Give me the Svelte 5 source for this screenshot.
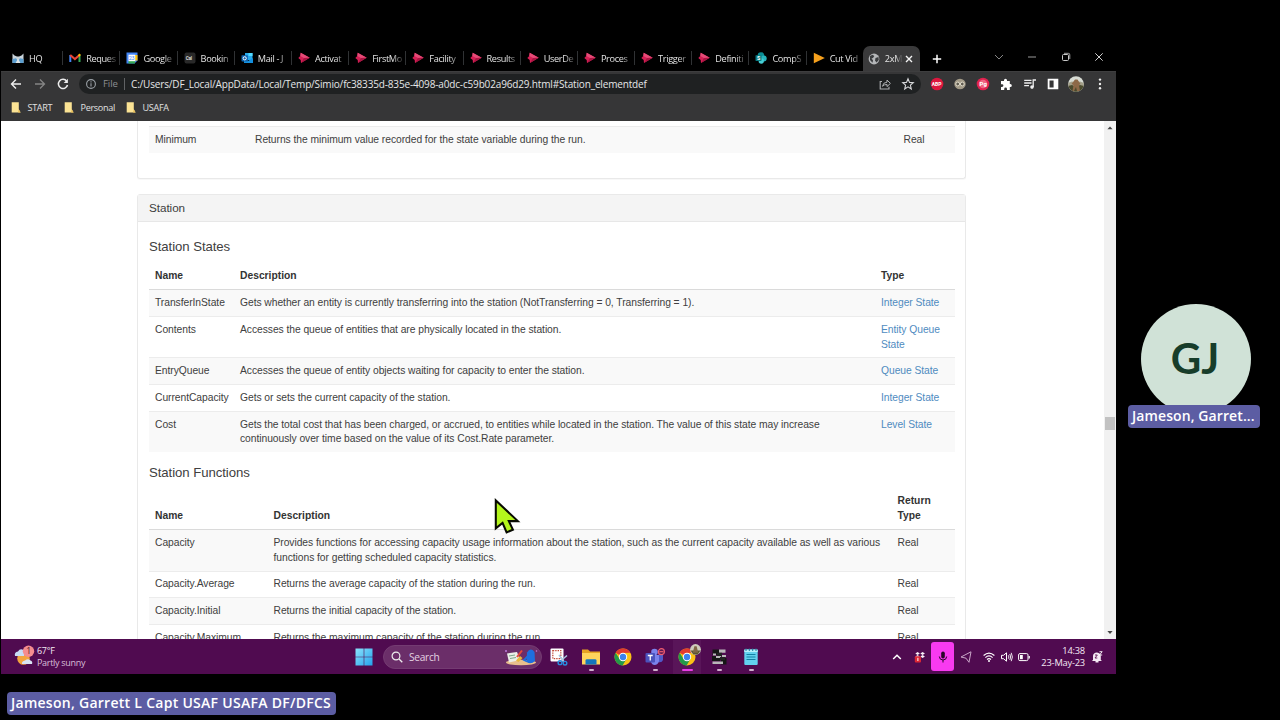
<script>
  const tabs = [
    ['hq', 'HQ'], ['gmail', 'Reques'], ['cal', 'Google'], ['cal2', 'Bookin'], ['mail', 'Mail - J'],
    ['simio', 'Activat'], ['simio', 'FirstMo'], ['simio', 'Facility'], ['simio', 'Results'], ['simio', 'UserDe'],
    ['simio', 'Proces'], ['simio', 'Trigger'], ['simio', 'Definiti'], ['sp', 'CompS'], ['cut', 'Cut Vid']
  ];
  const states = [
    ['TransferInState', ['Gets whether an entity is currently transferring into the station (NotTransferring = 0, Transferring = 1).'], ['Integer State']],
    ['Contents', ['Accesses the queue of entities that are physically located in the station.'], ['Entity Queue', 'State']],
    ['EntryQueue', ['Accesses the queue of entity objects waiting for capacity to enter the station.'], ['Queue State']],
    ['CurrentCapacity', ['Gets or sets the current capacity of the station.'], ['Integer State']],
    ['Cost', ['Gets the total cost that has been charged, or accrued, to entities while located in the station. The value of this state may increase', 'continuously over time based on the value of its Cost.Rate parameter.'], ['Level State']]
  ];
  const functions = [
    ['Capacity', ['Provides functions for accessing capacity usage information about the station, such as the current capacity available as well as various', 'functions for getting scheduled capacity statistics.']],
    ['Capacity.Average', ['Returns the average capacity of the station during the run.']],
    ['Capacity.Initial', ['Returns the initial capacity of the station.']],
    ['Capacity.Maximum', ['Returns the maximum capacity of the station during the run.']]
  ];
  const bookmarks = [['START', 53], ['Personal', 62], ['USAFA', 60]];
</script>

{#snippet lines(list)}
  {#each list as l}<div class="line">{l}</div>{/each}
{/snippet}

{#snippet tabIcon(kind)}
  <svg class="fav" viewBox="0 0 12 12">
    {#if kind === 'hq'}
      <path d="M0.5 1.5 L2.5 3.5 L5 4.5 H7 L9.5 3.5 L11.5 1.5 V11 H0.5Z" fill="#c9d3da" /><path d="M0.5 7 L4 6.3 L6 9 L8 6.3 L11.5 7 V11 H0.5Z" fill="#5d9fd0" /><path d="M3.6 11 L6 6.5 L8.4 11Z" fill="#dfe5e6" />
    {:else if kind === 'gmail'}
      <path d="M1.3 10V3" stroke="#4285f4" stroke-width="2" /><path d="M10.5 10V3" stroke="#34a853" stroke-width="2" /><path d="M1.2 3 L5.9 7 L10.6 3" fill="none" stroke="#ea4335" stroke-width="2.1" /><path d="M9.5 3.9 L11.3 2.3" stroke="#fbbc04" stroke-width="2" />
    {:else if kind === 'cal'}
      <path d="M0.5 0.5H11.5V8.5L8.5 11.5H0.5Z" fill="#4285f4" /><path d="M9 3H11.5V8.5H9Z" fill="#fbbc04" /><path d="M2.5 9H9V11.5H2.5Z" fill="#34a853" /><rect x="2.5" y="2.7" width="6.8" height="6.5" fill="#fff" /><text x="2.8" y="8.1" font-size="5.5" fill="#4285f4" font-family="Roboto">23</text>
    {:else if kind === 'cal2'}
      <rect x="0.5" y="0.5" width="11" height="11" rx="2" fill="#292929" /><text x="1.7" y="7.7" font-size="4.8" font-weight="700" fill="#d7d7d7" font-family="Roboto">Cal</text>
    {:else if kind === 'mail'}
      <path d="M4 1H11.5V8H4Z" fill="#28a8ea" /><path d="M7.5 1H11.5V4H7.5Z" fill="#50d9ff" /><path d="M3 7 L7 9 L12 6V11H3Z" fill="#1490df" /><rect x="0.5" y="3.2" width="6.4" height="6.2" rx="0.6" fill="#0f64b0" /><circle cx="3.7" cy="6.3" r="1.6" fill="none" stroke="#fff" stroke-width="1" />
    {:else if kind === 'simio'}
      <path d="M2.7 0.7 L11.7 5.8 L3 11 L2.7 8 L0.3 6 L2.3 4Z" fill="#d51f55" /><path d="M2.7 0.7 L11.7 5.8 L6 6 L2.3 4Z" fill="#e64b77" /><path d="M3 11 L6 6 L11.7 5.8Z" fill="#a91542" />
    {:else if kind === 'sp'}
      <circle cx="6" cy="3.7" r="3.4" fill="#0b8c93" /><circle cx="8.7" cy="6.4" r="3" fill="#27b4bc" /><circle cx="6.3" cy="9" r="2.7" fill="#45cdd4" /><rect x="0.5" y="3.2" width="6" height="5.7" rx="0.6" fill="#087b82" /><text x="1.9" y="7.9" font-size="5.4" font-weight="700" fill="#fff" font-family="Roboto">S</text>
    {:else}
      <path d="M0.8 0.8 L11.8 6 L0.8 11.3Z" fill="#f5a01d" />
    {/if}
  </svg>
{/snippet}

{#snippet chrome()}
  <circle cx="9" cy="9" r="8.5" fill="#fbc116" />
  <path d="M9 9 L1.6 4.8 A8.5 8.5 0 0 1 16.4 4.8 L9 5Z" fill="#e33b2e" />
  <path d="M1.6 4.8 A8.5 8.5 0 0 0 8.6 17.5 L12.4 11 L6 11.5Z" fill="#249a49" />
  <circle cx="9" cy="9" r="4.2" fill="#fff" /><circle cx="9" cy="9" r="3.2" fill="#3d82ed" />
{/snippet}

<div class="screen">
  <div class="desktop">
    <div class="tabstrip">
      {#each tabs as [kind, label], i}
        <div class="tab" class:last={i === tabs.length - 1}>{@render tabIcon(kind)}<span class="tl">{label}</span></div>
      {/each}
      <div class="tab active">
        <svg class="fav" viewBox="0 0 12 12"><circle cx="6" cy="6" r="5.4" fill="#b5b7b9" /><path d="M2 3 L4.5 1.8 L6.3 3 L5 5 L3.5 5.5 L5 7.3 L4.5 9.8 L2 7Z M7.5 5 L10.5 4 L10.8 7 L8.5 9.5 L7 7.5Z" fill="#3b3d3f" /></svg>
        <span class="tl short">2xM</span>
        <svg class="x" viewBox="0 0 8 8"><path d="M1 1 L7 7 M7 1 L1 7" stroke="#f4f4f4" stroke-width="1.4" /></svg>
      </div>
      <svg class="plus" viewBox="0 0 10 10"><path d="M5 0.8V9.2M0.8 5H9.2" stroke="#fff" stroke-width="1.5" /></svg>
      <div class="winbtns">
        <svg viewBox="0 0 12 12"><path d="M2 4 L6 8 L10 4" fill="none" stroke="#858585" /></svg>
        <svg viewBox="0 0 12 12"><path d="M2 6H10" stroke="#9a9a9a" /></svg>
        <svg viewBox="0 0 12 12"><rect x="2.5" y="3.5" width="6" height="6" rx="1" fill="none" stroke="#c8c8c8" /><path d="M4 2.3H8.3Q9.8 2.3 9.8 3.8V8" fill="none" stroke="#c8c8c8" stroke-width=".8" /></svg>
        <svg viewBox="0 0 12 12"><path d="M2.3 2.3 L9.7 9.7 M9.7 2.3 L2.3 9.7" stroke="#d0d0d0" /></svg>
      </div>
    </div>

    <div class="toolbar">
      <svg class="nav" viewBox="0 0 12 12"><path d="M11 6H1.7M6 1.5 L1.5 6 L6 10.5" fill="none" stroke="#eee" stroke-width="1.4" /></svg>
      <svg class="nav" viewBox="0 0 12 12"><path d="M1 6H10.3M6 1.5 L10.5 6 L6 10.5" fill="none" stroke="#858585" stroke-width="1.3" /></svg>
      <svg class="nav" viewBox="0 0 12 12"><path d="M9.7 3.2A4.6 4.6 0 1 0 10.5 7" fill="none" stroke="#eee" stroke-width="1.5" /><path d="M10.9 0.8V5H6.7Z" fill="#eee" /></svg>
      <div class="omni">
        <svg class="info" viewBox="0 0 12 12"><circle cx="6" cy="6" r="4.4" fill="none" stroke="#9aa0a6" stroke-width="1.1" /><path d="M6 5.3V8.5M6 3.3V4.4" stroke="#9aa0a6" stroke-width="1.1" /></svg>
        <span class="file">File</span>
        <span class="url">C:/Users/DF_Local/AppData/Local/Temp/Simio/fc38335d-835e-4098-a0dc-c59b02a96d29.html#Station_elementdef</span>
        <div class="cells">
          <svg viewBox="0 0 14 14"><path d="M4 4.5H2.2V12H11V9.8" fill="none" stroke="#aeb0b2" stroke-width="1.1" /><path d="M4.5 9.3Q5 5.3 9 5.2V3L12.4 6.4L9 9.6V7.5Q6.3 7.3 4.5 9.3Z" fill="none" stroke="#aeb0b2" /></svg>
          <svg viewBox="0 0 14 14"><path d="M7 1.8 L8.5 5.4 L12.3 5.7 L9.4 8.2 L10.3 12 L7 9.9 L3.7 12 L4.6 8.2 L1.7 5.7 L5.5 5.4Z" fill="none" stroke="#d5d6d8" stroke-width="1.1" /></svg>
        </div>
      </div>
      <div class="cells ext">
        <svg viewBox="0 0 14 14"><circle cx="7" cy="7" r="6.3" fill="#dc173e" /><text x="1.7" y="8.8" font-size="5" font-weight="700" fill="#fff" font-family="Roboto">ABP</text></svg>
        <svg viewBox="0 0 14 14"><ellipse cx="7" cy="7" rx="5.7" ry="5.3" fill="#a49b88" /><circle cx="4.7" cy="7" r="1.9" fill="#605b50" stroke="#e1dccb" /><circle cx="9.3" cy="7" r="1.9" fill="#605b50" stroke="#e1dccb" /></svg>
        <svg viewBox="0 0 14 14"><circle cx="7" cy="7" r="6.3" fill="#e0224f" /><circle cx="7" cy="7" r="4.3" fill="#ef6583" /><text x="3.6" y="9.2" font-size="6" font-weight="700" fill="#fff" font-family="Roboto">Pg</text></svg>
        <svg viewBox="0 0 14 14"><path d="M2 4H5V3.2A1.5 1.5 0 0 1 8 3.2V4H10.8V7H11.3A1.5 1.5 0 0 1 11.3 10H10.8V13H8V12A1.4 1.4 0 0 0 5.2 12V13H2V10H3A1.4 1.4 0 0 0 3 7.2H2Z" fill="#fff" /></svg>
        <svg viewBox="0 0 14 14"><path d="M1.2 3.3H8.5M1.2 6H8.5M1.2 8.7H6" stroke="#eee" stroke-width="1.3" /><path d="M10.2 10V3H13" fill="none" stroke="#eee" stroke-width="1.3" /><circle cx="9" cy="10.1" r="1.8" fill="#eee" /></svg>
        <svg viewBox="0 0 14 14"><path d="M1.7 1.8H12.3V12.2H1.7Z M3.5 3.6V10.4H7.6V3.6Z" fill="#fff" fill-rule="evenodd" /></svg>
        <svg class="big" viewBox="0 0 16 16"><clipPath id="av"><circle cx="8" cy="8" r="7.8" /></clipPath><g clip-path="url(#av)"><rect width="16" height="16" fill="#d8dcd5" /><path d="M0 7 L4 5.5 L8 7 L12 5.5 L16 7V16H0Z" fill="#a3a08a" /><path d="M0 10 L4 9 L8 11 L12 9 L16 10V16H0Z" fill="#4a4a2c" /><path d="M7 3.5H9.5L12.5 8L11 9L12 15H9L8 11L6 15H4.5L5.5 9L3.5 8Z" fill="#8d6948" /></g></svg>
        <svg viewBox="0 0 14 14"><circle cx="7" cy="2.6" r="1.2" fill="#eee" /><circle cx="7" cy="7" r="1.2" fill="#eee" /><circle cx="7" cy="11.2" r="1.2" fill="#eee" /></svg>
      </div>
    </div>

    <div class="bookmarks">
      {#each bookmarks as [name, w]}
        <div class="bm" style="width:{w}px"><svg viewBox="0 0 10 11"><path d="M0.7 0.3H7.8V7.3L9.6 10.5H0.7Z" fill="#fbe394" /><path d="M7.8 7.3L9.6 10.5H7Z" fill="#e8bd55" /></svg><span>{name}</span></div>
      {/each}
    </div>

    <div class="page">
      <div class="content">
        <section class="card prev">
          <div class="row min alt"><div>Minimum</div><div>Returns the minimum value recorded for the state variable during the run.</div><div>Real</div></div>
        </section>
        <section class="card">
          <div class="cardhead">Station</div>
          <div class="cardbody">
            <h4>Station States</h4>
            <div class="table st">
              <div class="row head"><div>Name</div><div>Description</div><div>Type</div></div>
              {#each states as [name, desc, type], i}
                <div class="row" class:alt={i % 2 === 0} class:two={desc.length + type.length > 2}>
                  <div>{name}</div><div>{@render lines(desc)}</div><div class="link">{@render lines(type)}</div>
                </div>
              {/each}
            </div>
            <h4 class="second">Station Functions</h4>
            <div class="table fn">
              <div class="row head tall"><div>Name</div><div>Description</div><div>{@render lines(['Return', 'Type'])}</div></div>
              {#each functions as [name, desc], i}
                <div class="row" class:alt={i % 2 === 0} class:two={desc.length > 1}>
                  <div>{name}</div><div>{@render lines(desc)}</div><div>Real</div>
                </div>
              {/each}
            </div>
          </div>
        </section>
      </div>
      <div class="scroll">
        <svg viewBox="0 0 12 12"><path d="M3.4 7.8 L6 5 L8.6 7.8Z" fill="#444" /></svg>
        <div class="thumb"></div>
        <svg viewBox="0 0 12 12"><path d="M3.4 4.6 L6 7.4 L8.6 4.6Z" fill="#444" /></svg>
      </div>
    </div>

    <div class="taskbar">
      <div class="weather">
        <svg viewBox="0 0 22 22"><circle cx="9.5" cy="13.5" r="6.3" fill="#f3a43e" /><path d="M1 11 Q0 7 4 6.5 Q6 3 9.5 5 Q11 7 10 11Z" fill="#c8dcf5" /><path d="M8 19 Q7.5 16 11 15.5 Q14 13 16.5 15.5 Q19 16.5 18 19Z" fill="#d9e4f3" /><circle cx="14.5" cy="6.2" r="5.7" fill="#f48c90" /><text x="12.3" y="9.3" font-size="8.5" fill="#4d2026" font-family="Open Sans">1</text></svg>
        <div class="wt"><div class="deg">67°F</div><div class="ps">Partly sunny</div></div>
      </div>
      <svg class="start" viewBox="0 0 18 18"><defs><linearGradient id="wg" x2="1" y2="1"><stop stop-color="#8be3fb" /><stop offset="1" stop-color="#24a2ec" /></linearGradient></defs><path d="M0.5 0.5H8.7V8.7H0.5ZM9.3 0.5H17.5V8.7H9.3ZM0.5 9.3H8.7V17.5H0.5ZM9.3 9.3H17.5V17.5H9.3Z" fill="url(#wg)" /></svg>
      <div class="search">
        <svg class="mag" viewBox="0 0 12 12"><circle cx="5" cy="5" r="3.9" fill="none" stroke="#eee" stroke-width="1.2" /><path d="M8 8L11.3 11.3" stroke="#eee" stroke-width="1.3" /></svg>
        <span>Search</span>
        <svg class="art" viewBox="0 0 34 18"><ellipse cx="17" cy="14.5" rx="15" ry="2.8" fill="#e8bf8d" /><path d="M3 5.5 L13 4 L16 12 L5 14.5Z" fill="#ecefe8" /><path d="M5 8 L11 7 M6 10.5 L12 9.5" stroke="#7da98b" fill="none" /><path d="M13 9 L18 2.5" stroke="#e64b3c" stroke-width="2" /><path d="M12 12.5 L16 8 L18.5 10 L14.5 14Z" fill="#e9b83b" /><path d="M23 4.5 Q26.5 -1 30.5 4 L31 13 Q27 17 22.5 14Z" fill="#1d6fdf" /><path d="M24 8 L20 12 L23 13.5" stroke="#1d6fdf" stroke-width="1.8" fill="none" /><circle cx="2" cy="3" r="1" fill="#bc77db" /><circle cx="32.5" cy="3" r=".8" fill="#c97bd5" /></svg>
      </div>
      <div class="apps">
        <div class="app"><svg viewBox="0 0 18 18"><rect x="0.5" y="0.5" width="13" height="13" rx="1" fill="#fff" /><rect x="2.8" y="2.6" width="8" height="8" fill="none" stroke="#c24c3b" stroke-width="1.3" stroke-dasharray="1.4 1" /><path d="M9 7 L14.2 14 M17 7.5 L10 13.5" stroke="#a9c8e2" stroke-width="1.5" /><circle cx="10" cy="14.7" r="1.9" fill="none" stroke="#298de0" stroke-width="1.4" /><circle cx="15" cy="15.2" r="1.8" fill="none" stroke="#298de0" stroke-width="1.4" /></svg></div>
        <div class="app dot"><svg viewBox="0 0 18 18"><path d="M0 1.5H6L8 3.5H18V16H0Z" fill="#e6a323" /><path d="M0 5H18V16.5H0Z" fill="#ffd45c" /><path d="M3.5 16.5V12.5Q3.5 11.2 5 11.2H13Q14.5 11.2 14.5 12.5V16.5Z" fill="#1476be" /></svg></div>
        <div class="app"><svg viewBox="0 0 18 18">{@render chrome()}</svg></div>
        <div class="app dot"><svg class="wide" viewBox="0 0 20 18"><circle cx="9.5" cy="4" r="3.3" fill="#7b83eb" /><circle cx="15.5" cy="5" r="2.2" fill="#5059c9" /><path d="M12 7H18V12Q17 15 13 14Z" fill="#5059c9" /><path d="M6 7H14V13Q13 17 9.5 17Q7 17 6 14Z" fill="#7b83eb" /><rect x="0.5" y="5" width="9.5" height="9.5" rx="1" fill="#4b53bc" /><path d="M2.8 7.5H7.7M5.25 7.5V12.5" stroke="#fff" stroke-width="1.3" /><circle cx="16.4" cy="3.7" r="3" fill="#5b1951" stroke="#ef5b70" stroke-width="1.2" /><path d="M14.4 3.7H18.4" stroke="#ef5b70" stroke-width="1.2" /></svg></div>
        <div class="app run"><svg viewBox="0 0 18 18">{@render chrome()}</svg><svg class="badge" viewBox="0 0 10 10"><circle cx="5" cy="5" r="4.9" fill="#cfccbd" /><path d="M0.5 6H9.5L7 9.5H3Z" fill="#5a5531" /><path d="M4 2H6L7.5 8H2.5Z" fill="#806746" /></svg></div>
        <div class="app dot"><svg viewBox="0 0 18 18"><path d="M2.5 1.5H9V7H2.5Z M11 10H16.5V16.5H11Z M2 8H10V13H2Z" fill="#161616" /><path d="M9 1.5H15.5V4.8H9Z M3 5.5H6V7.5H3Z M12 7H16V9H12Z M6 8H11V10H6Z M2.5 13.5H13V16H2.5Z" fill="#b9b7b9" /><path d="M7 4.8H12V8H7Z M10 9H15V12H10Z" fill="#222" /></svg></div>
        <div class="app dot"><svg viewBox="0 0 18 18"><rect x="2.3" y="1.5" width="13.4" height="15.5" rx="1" fill="#62d1ee" /><path d="M2.3 1.5H15.7V4H2.3Z" fill="#b5effb" /><path d="M4.5 6.5H13.5M4.5 9H13.5M4.5 11.5H13.5" stroke="#1281a4" stroke-width="1.2" /><path d="M4 .5V3M7.3 .5V3M10.7 .5V3M14 .5V3" stroke="#187c9b" /></svg></div>
      </div>
      <div class="tray">
        <div class="tc w23"><svg viewBox="0 0 12 12"><path d="M2.2 8 L6 4.2 L9.8 8" fill="none" stroke="#fff" stroke-width="1.5" /></svg></div>
        <div class="tc w23"><svg viewBox="0 0 12 12"><path d="M1.3 2.5L3.6 1L5.8 2.5L3.6 4Z M6.3 2.5L8.6 1L10.9 2.5L8.6 4Z M6.3 5.6L8.6 4.1L10.9 5.6L8.6 7.1Z M1.3 5.6L3.6 4.1L5.8 5.6L3.6 7.1Z" fill="#f8f0f7" /><rect x="0.8" y="5.2" width="6.2" height="6.3" rx="1" fill="#da2635" /><path d="M3.9 6.8V10" stroke="#fff" /></svg></div>
        <div class="mic"><svg viewBox="0 0 12 12"><rect x="4.2" y=".5" width="3.6" height="7" rx="1.8" fill="#28052a" /><path d="M2.3 5.5Q2.5 9 6 9Q9.5 9 9.7 5.5M6 9V11.5" fill="none" stroke="#28052a" stroke-width="1" /></svg></div>
        <div class="tc w23"><svg viewBox="0 0 12 12"><path d="M11 .8 L1 6 L6 7.2 L9 11.3Z" fill="none" stroke="#c9a6c8" stroke-width="1" /></svg></div>
        <div class="tc w23"><svg viewBox="0 0 12 12"><path d="M.6 4.5Q6 -.4 11.4 4.5M2.4 6.6Q6 3.3 9.6 6.6M4 8.5Q6 6.7 8 8.5" fill="none" stroke="#fff" stroke-width="1.1" /><circle cx="6" cy="10" r="1" fill="#fff" /></svg></div>
        <div class="tc w14"><svg viewBox="0 0 12 12"><path d="M.5 4.3H2.5L5.5 1.8V10.2L2.5 7.7H.5Z" fill="none" stroke="#fff" /><path d="M7.3 4.3Q8.6 6 7.3 7.7M8.8 3Q10.6 6 8.8 9M10.2 1.8Q12.6 6 10.2 10.2" fill="none" stroke="#fff" stroke-width=".9" /></svg></div>
        <div class="tc w20"><svg viewBox="0 0 12 12"><rect x=".6" y="2.6" width="9.4" height="7" rx="1.3" fill="none" stroke="#fff" /><rect x="2" y="4" width="2.8" height="4.2" fill="#fff" /><path d="M11.2 5V7.5" stroke="#fff" stroke-width="1.3" /></svg></div>
        <div class="clock"><div>14:38</div><div class="dt">23-May-23</div></div>
        <div class="tc bell"><svg viewBox="0 0 12 12"><path d="M2 9V5Q2.2 1.5 6 1.5Q9.8 2 9.8 5.5V9L11 10H.8Z" fill="#f5e9f4" /><path d="M4.5 10.7H7.5" stroke="#f5e9f4" stroke-width="1.6" /><path d="M4 4H6.3L4 7H6.3" stroke="#5a1050" stroke-width=".9" fill="none" /><path d="M8.5 .7H11.2L8.5 4H11.2" stroke="#fff" stroke-width=".9" fill="none" /></svg></div>
      </div>
    </div>
  </div>

  <div class="tile"><div class="avatar">GJ</div><div class="label side">Jameson, Garret...</div></div>
  <div class="foot"><div class="label big">Jameson, Garrett L Capt USAF USAFA DF/DFCS</div></div>

  <svg class="cursor" viewBox="0 0 30 42"><path d="M2 2 V33 L9.5 27 L14 37.5 L21 34.5 L16.5 25 H26.5Z" fill="#b4f51c" stroke="#080a02" stroke-width="2.3" stroke-linejoin="miter" /></svg>
</div>

<style>
  :global(body) { background: #000; overflow: hidden; }
  * { box-sizing: border-box; }
  svg { display: block; flex: none; }
  .screen { width: 1280px; height: 720px; background: #000; position: relative; display: grid; grid-template: 674px 46px / 1116px 164px; overflow: hidden; font-family: "Open Sans", "Noto Sans", sans-serif; }
  .desktop { padding: 45px 0 0 1px; display: flex; flex-direction: column; min-width: 0; }
  .tabstrip { height: 26px; display: flex; padding-left: 5px; align-items: stretch; flex: none; }
  .tab { width: 57.2px; flex: none; display: flex; align-items: center; padding-left: 6px; color: #e4e4e4; font-size: 9.2px; letter-spacing: -.35px; position: relative; }
  .tab::after { content: ''; position: absolute; right: 0; top: 6px; width: 1px; height: 14px; background: #303234; }
  .tab.last::after, .tab.active::after { display: none; }
  .fav { width: 12px; height: 12px; }
  .tl { margin-left: 5px; width: 33px; white-space: nowrap; mask-image: linear-gradient(90deg, #000 62%, rgba(0,0,0,.2) 92%); }
  .tab.active { background: #3a3a3b; border-radius: 7px 7px 0 0; margin-left: -1px; margin-top: 1px; padding-left: 5px; }
  .tl.short { width: 17px; }
  .x { width: 8px; height: 8px; margin-left: 3px; }
  .plus { width: 10px; height: 10px; margin: 9px 0 0 11.5px; }
  .winbtns { margin-left: auto; display: flex; gap: 21.4px; padding: 6px 11px 0 0; }
  .winbtns svg { width: 12px; height: 12px; }
  .toolbar { height: 25px; background: #363637; display: flex; align-items: center; padding-left: 9px; flex: none; border-top: 1px solid #3e3e3f; }
  .nav { width: 12px; height: 12px; margin-right: 11.5px; }
  .omni { width: 842px; height: 20px; margin-left: -1.5px; border-radius: 10px; background: #1f2122; display: flex; align-items: center; padding-left: 6px; flex: none; white-space: nowrap; }
  .info { width: 12px; height: 12px; }
  .file { color: #8b8e91; font-size: 9.6px; margin-left: 6px; border-right: 1px solid #606264; line-height: 12px; width: 21.5px; letter-spacing: -.1px; }
  .url { color: #e6e7e8; font-size: 10px; margin-left: 6.5px; letter-spacing: -.158px; }
  .cells { display: flex; margin-left: auto; padding-right: 1px; }
  .cells svg { width: 14px; height: 14px; margin: 0 4.65px; }
  .cells.ext { margin: 0 0 0 4px; padding: 0; align-items: center; }
  .cells svg.big { width: 16px; height: 16px; margin: 0 3.65px; }
  .bookmarks { height: 25px; background: #363637; display: flex; flex: none; padding: 0 0 3px 10px; color: #e0e0e0; font-size: 9.1px; letter-spacing: -.32px; align-items: center; }
  .bm { display: flex; align-items: center; gap: 6.5px; }
  .bm svg { width: 10px; height: 11px; }
  .page { height: 518px; background: #fff; display: flex; overflow: hidden; flex: none; font-family: "Liberation Sans", Arial, sans-serif; font-size: 10.3px; letter-spacing: -.052px; line-height: 14.6px; color: #404040; }
  .content { flex: 1; padding: 0 138.5px 0 136px; }
  .card { border: 1px solid #e9e9e9; border-radius: 3px; box-shadow: 0 1px 1px rgba(0,0,0,.03); }
  .prev { height: 58px; border-top: 0; border-radius: 0 0 3px 3px; padding: 5px 10px 0 11px; margin-bottom: 15px; }
  .cardhead { background: #f4f4f4; height: 27px; border-bottom: 1px solid #e7e7e7; padding: 6px 11px; font-size: 11.7px; line-height: 14px; }
  .cardbody { padding: 16px 10px 0 11px; }
  h4 { margin: 0; font-size: 13.2px; line-height: 18px; font-weight: 400; height: 24.7px; letter-spacing: -.07px; }
  h4.second { margin-top: 12px; height: 25px; }
  .row { display: grid; height: 26.8px; padding: 5.7px 0 0 6px; border-top: 1px solid #ececec; white-space: nowrap; }
  .row.alt { background: #f9f9f9; }
  .row.two { height: 41px; }
  .row.min { padding-top: 5.5px; }
  .row.head { font-weight: 700; border-top: 0; border-bottom: 1px solid #dadada; height: 27px; color: #333; padding-top: 6px; letter-spacing: 0; }
  .row.head.tall { height: 40.6px; align-items: end; padding: 0 0 5.2px 6px; }
  .head + .row { border-top: 0; padding-top: 6.3px; }
  .st .row { grid-template-columns: 85px 641px 1fr; }
  .fn .row { grid-template-columns: 118.5px 624px 1fr; }
  .row.min { grid-template-columns: 100px 648.5px 1fr; }
  .link { color: #4f8bbf; }
  .scroll { width: 12px; background: #f1f1f1; display: flex; flex-direction: column; }
  .scroll svg { width: 12px; height: 13px; }
  .thumb { height: 13px; margin: 282.5px 1px auto; background: #c2c2c2; }
  .taskbar { height: 35px; background: #500b50; display: flex; align-items: center; color: #f4eaf4; flex: none; }
  .weather { display: flex; padding-left: 13px; width: 354px; }
  .weather svg { width: 22px; height: 22px; }
  .wt { font-size: 9px; line-height: 12px; margin-left: 1px; letter-spacing: -.3px; }
  .ps { color: #d8bfd8; }
  .start { width: 18px; height: 18px; }
  .search { width: 159px; height: 24px; border-radius: 12px; background: #6b2e69; border: 1px solid #743b72; margin-left: 10px; display: flex; align-items: center; padding: 0 3px 0 7px; font-size: 10.2px; letter-spacing: -.3px; color: #e3d2e2; }
  .mag { width: 12px; height: 12px; margin-right: 6px; }
  .art { width: 34px; height: 18px; margin-left: auto; }
  .apps { display: flex; margin-left: 1px; }
  .app { width: 32px; height: 34px; display: flex; justify-content: center; align-items: center; position: relative; }
  .app > svg { width: 18px; height: 18px; }
  .app > svg.wide { width: 20px; }
  .dot::after, .run::after { content: ''; position: absolute; bottom: 3px; width: 5px; height: 2px; border-radius: 1px; background: #cfb0cd; }
  .run::after { width: 11px; background: #ea3ce6; }
  .run { background: linear-gradient(90deg, transparent 2px, #591559 2px 30px, transparent 30px); }
  .app > svg.badge { position: absolute; width: 11px; height: 11px; right: 2px; top: 4px; }
  .tray { margin-left: auto; display: flex; align-items: center; padding-right: 13px; }
  .tc { display: flex; justify-content: center; }
  .tc svg, .mic svg { width: 12px; height: 12px; }
  .w23 { width: 23px; } .w14 { width: 14px; } .w20 { width: 20px; }
  .mic { width: 23px; height: 29px; border-radius: 3px; background: #f83af0; display: grid; place-items: center; }
  .clock { font-size: 9.3px; line-height: 12px; text-align: right; width: 51px; letter-spacing: -.2px; }
  .bell { margin-left: 6px; }
  .tile { padding: 304px 0 0; display: flex; flex-direction: column; align-items: center; }
  .avatar { width: 110px; height: 110px; border-radius: 50%; background: #d0e2d7; color: #173d2a; font-family: Lato, sans-serif; font-size: 42px; font-weight: 700; display: flex; justify-content: center; align-items: center; flex: none; margin-right: 4px; padding: 0 2px 2px 0; }
  .label { background: #5c5da3; color: #fff; border-radius: 4px; height: 23px; line-height: 22px; font-size: 14px; font-weight: 600; padding: 0 4px; white-space: nowrap; }
  .side { width: 132px; margin: -9px 8px 0 0; position: relative; letter-spacing: .1px; }
  .foot { grid-column: 1 / 3; padding: 18px 0 0 7px; }
  .big.label { width: 329px; letter-spacing: .28px; }
  .cursor { position: absolute; left: 494px; top: 498px; width: 27px; height: 39px; }
</style>
